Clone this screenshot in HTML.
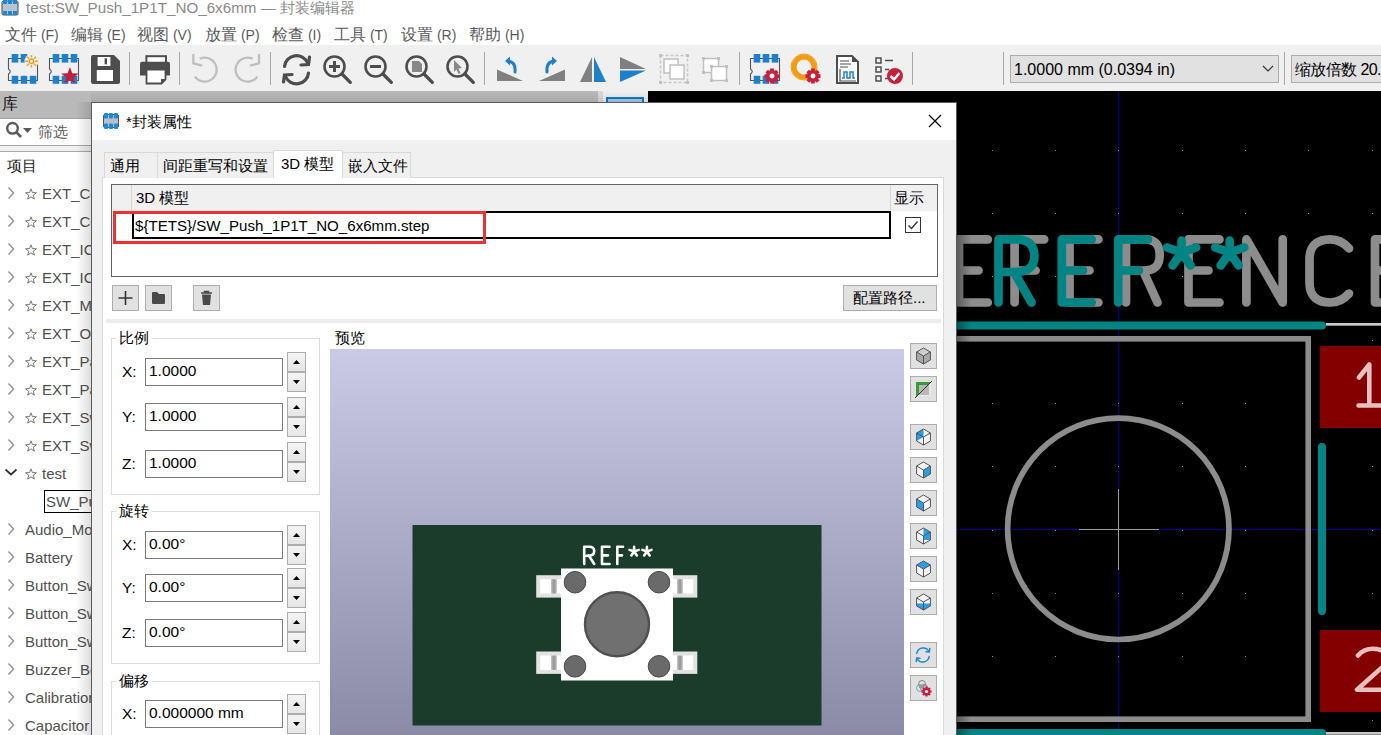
<!DOCTYPE html>
<html><head><meta charset="utf-8">
<style>
*{box-sizing:border-box}
body{margin:0;width:1381px;height:735px;overflow:hidden;position:relative;background:#f0f0f0;font-family:"Liberation Sans",sans-serif;color:#000}
.a{position:absolute}
.t{position:absolute;white-space:nowrap;line-height:1}
#titlebar{left:0;top:0;width:1381px;height:45px;background:#fff}
#toolbar{left:0;top:45px;width:1381px;height:46px;background:#f0f0f0}
.sep{position:absolute;top:54px;width:1px;height:30px;background:#a0a0a0}
#lib{left:0;top:91px;width:598px;height:644px;background:#fff}
#libhdr{left:0;top:91px;width:598px;height:27px;background:#b9b9b9}
#vtool{left:598px;top:91px;width:50px;height:644px;background:#f0f0f0}
#canvas{left:648px;top:91px;width:733px;height:644px;background:#000}
.tree{position:absolute;left:0;font-size:14px;color:#444}
#dlg{left:91px;top:102px;width:866px;height:640px;background:#f0f0f0;border:1px solid #5a5a5a;border-bottom:none}
</style></head><body>

<!-- title + menu -->
<div id="titlebar" class="a"></div>
<svg class="a" style="left:1px;top:0" width="18" height="16" viewBox="0 0 18 16">
  <rect x="1" y="1" width="16" height="14" rx="1.5" fill="#b8c4d0" stroke="#444" stroke-width="1"/>
  <rect x="2" y="0" width="4" height="4" fill="#1e88d4"/><rect x="7" y="0" width="4" height="4" fill="#1e88d4"/><rect x="12" y="0" width="4" height="4" fill="#1e88d4"/>
  <rect x="2" y="11" width="4" height="4" fill="#1e88d4"/><rect x="7" y="11" width="4" height="4" fill="#1e88d4"/><rect x="12" y="11" width="4" height="4" fill="#1e88d4"/>
</svg>
<div class="t" style="left:26px;top:0px;font-size:15.2px;color:#8a8a8a">test:SW_Push_1P1T_NO_6x6mm — 封装编辑器</div>
<div class="t" style="top:27px;font-size:14px;color:#5a5a5a;left:5px"><span style="font-size:15.5px">文件</span> (F)</div>
<div class="t" style="top:27px;font-size:14px;color:#5a5a5a;left:71px"><span style="font-size:15.5px">编辑</span> (E)</div>
<div class="t" style="top:27px;font-size:14px;color:#5a5a5a;left:137px"><span style="font-size:15.5px">视图</span> (V)</div>
<div class="t" style="top:27px;font-size:14px;color:#5a5a5a;left:205px"><span style="font-size:15.5px">放置</span> (P)</div>
<div class="t" style="top:27px;font-size:14px;color:#5a5a5a;left:272px"><span style="font-size:15.5px">检查</span> (I)</div>
<div class="t" style="top:27px;font-size:14px;color:#5a5a5a;left:334px"><span style="font-size:15.5px">工具</span> (T)</div>
<div class="t" style="top:27px;font-size:14px;color:#5a5a5a;left:401px"><span style="font-size:15.5px">设置</span> (R)</div>
<div class="t" style="top:27px;font-size:14px;color:#5a5a5a;left:469px"><span style="font-size:15.5px">帮助</span> (H)</div>

<!-- toolbar -->
<div id="toolbar" class="a"></div>
<svg class="a" style="left:0;top:0" width="1381" height="91" viewBox="0 0 1381 91"><rect x="129.0" y="52" width="1" height="33" fill="#a8a8a8"/><rect x="179.0" y="52" width="1" height="33" fill="#a8a8a8"/><rect x="270.0" y="52" width="1" height="33" fill="#a8a8a8"/><rect x="484.0" y="52" width="1" height="33" fill="#a8a8a8"/><rect x="739.0" y="52" width="1" height="33" fill="#a8a8a8"/><rect x="912.0" y="52" width="1" height="33" fill="#a8a8a8"/><rect x="1003.0" y="52" width="1" height="33" fill="#a8a8a8"/><rect x="1284.0" y="52" width="1" height="33" fill="#a8a8a8"/><path d="M8.5 58.5 H37.5 V80.5 H8.5 V74 Q12 71.5 8.5 69 V63 Z" fill="none" stroke="#555" stroke-width="1.1"/><rect x="11.7" y="54" width="6.6" height="8.6" fill="#1e7fcc"/><rect x="20.7" y="54" width="6.6" height="8.6" fill="#1e7fcc"/><rect x="11.7" y="75.8" width="6.6" height="8" fill="#1e7fcc"/><rect x="20.7" y="75.8" width="6.6" height="8" fill="#1e7fcc"/><rect x="29.7" y="75.8" width="6.6" height="8" fill="#1e7fcc"/><circle cx="31.5" cy="61.2" r="7" fill="#f0f0f0"/><circle cx="31.5" cy="61.2" r="4.2" fill="#f0f0f0"/><circle cx="31.5" cy="61.2" r="2.2" fill="none" stroke="#f39c12" stroke-width="1.4"/><path d="M35.10 61.20 L37.80 61.20 M34.05 63.75 L35.95 65.65 M31.50 64.80 L31.50 67.50 M28.95 63.75 L27.05 65.65 M27.90 61.20 L25.20 61.20 M28.95 58.65 L27.05 56.75 M31.50 57.60 L31.50 54.90 M34.05 58.65 L35.95 56.75 " stroke="#f39c12" stroke-width="1.4"/><path d="M49.5 58.5 H78.5 V80.5 H49.5 V74 Q53 71.5 49.5 69 V63 Z" fill="none" stroke="#555" stroke-width="1.1"/><rect x="52.7" y="54" width="6.6" height="8.6" fill="#1e7fcc"/><rect x="61.7" y="54" width="6.6" height="8.6" fill="#1e7fcc"/><rect x="70.7" y="54" width="6.6" height="8.6" fill="#1e7fcc"/><rect x="52.7" y="75.8" width="6.6" height="8" fill="#1e7fcc"/><rect x="61.7" y="75.8" width="6.6" height="8" fill="#1e7fcc"/><rect x="70.7" y="75.8" width="6.6" height="8" fill="#1e7fcc"/><polygon points="69.90,67.10 72.19,73.14 78.65,73.46 73.61,77.51 75.31,83.74 69.90,80.20 64.49,83.74 66.19,77.51 61.15,73.46 67.61,73.14" fill="#c0203c"/><path d="M91 57 Q91 55 93 55 H114 L120 61 V82 Q120 84 118 84 H93 Q91 84 91 82 Z" fill="#4d4d4d"/><rect x="97.6" y="57" width="12.8" height="9" fill="#fff"/><rect x="104.6" y="58.3" width="2.4" height="6" fill="#4d4d4d"/><rect x="96.8" y="70" width="16.2" height="11" fill="#fff"/><rect x="146.4" y="56.2" width="19.6" height="10" fill="#fff" stroke="#4d4d4d" stroke-width="2"/><path d="M142 61.8 H168 Q170 61.8 170 64 V75.5 H140 V64 Q140 61.8 142 61.8 Z" fill="#4d4d4d"/><path d="M146.5 69.5 H165.5 V79.5 L161.5 83.5 H146.5 Z" fill="#fff" stroke="#4d4d4d" stroke-width="1.8"/><path d="M161 83.5 V79 H166 Z" fill="#4d4d4d"/><g fill="none" stroke="#bfbfbf" stroke-width="2.3"><path d="M199.6 58.8 A12 12 0 1 1 194.9 76.6"/><path d="M193.3 54 V63.3 L202.3 65.6"/></g><g fill="none" stroke="#bfbfbf" stroke-width="2.3"><path d="M252.7 58.8 A12 12 0 1 0 257.4 76.6"/><path d="M259.0 54 V63.3 L250.0 65.6"/></g><g fill="none" stroke="#4d4d4d" stroke-width="3.2" stroke-linecap="round"><path d="M284.5 66.5 A12 12 0 0 1 307.5 63"/><path d="M308.5 73 A12 12 0 0 1 285.5 76.5"/><path d="M301 65 L308.5 64.5 L309.5 57"/><path d="M292 74.5 L284.5 75 L283.5 82"/></g><g transform="translate(323,55)"><circle cx="11.5" cy="11.5" r="10" fill="none" stroke="#4d4d4d" stroke-width="2.6"/><path d="M19 19 L27.3 27.3" stroke="#4d4d4d" stroke-width="3.3" stroke-linecap="round"/><path d="M11.5 6 V17 M6 11.5 H17" stroke="#4d4d4d" stroke-width="3"/></g><g transform="translate(364,55)"><circle cx="11.5" cy="11.5" r="10" fill="none" stroke="#4d4d4d" stroke-width="2.6"/><path d="M19 19 L27.3 27.3" stroke="#4d4d4d" stroke-width="3.3" stroke-linecap="round"/><path d="M6 11.5 H17" stroke="#4d4d4d" stroke-width="3"/></g><g transform="translate(405,55)"><circle cx="11.5" cy="11.5" r="10" fill="none" stroke="#4d4d4d" stroke-width="2.6"/><path d="M19 19 L27.3 27.3" stroke="#4d4d4d" stroke-width="3.3" stroke-linecap="round"/><path d="M7 6 H14 L17 9 V17 H7 Z" fill="#888"/></g><g transform="translate(446,55)"><circle cx="11.5" cy="11.5" r="10" fill="none" stroke="#4d4d4d" stroke-width="2.6"/><path d="M19 19 L27.3 27.3" stroke="#4d4d4d" stroke-width="3.3" stroke-linecap="round"/><path d="M8 5 L16 13 L12.5 13.5 L14.5 18 L12.5 19 L10.5 14.5 L8 17 Z" fill="#888"/></g><g transform="translate(497,56)"><path d="M0 13.5 L26 25 H0 Z" fill="#808080"/><path d="M18 16 Q19 6 11 5" fill="none" stroke="#1e7fcc" stroke-width="3" stroke-linecap="round"/><path d="M8 5 L13 0.5 L13 9.5 Z" fill="#1e7fcc"/></g><g transform="translate(539,56)"><path d="M26 13.5 L0 25 H26 Z" fill="#808080"/><path d="M8 16 Q7 6 15 5" fill="none" stroke="#1e7fcc" stroke-width="3" stroke-linecap="round"/><path d="M18 5 L13 0.5 L13 9.5 Z" fill="#1e7fcc"/></g><g transform="translate(580,57)"><path d="M12 0 V25 H0 Z" fill="#808080"/><path d="M14 0 V25 H26 Z" fill="#1e7fcc"/></g><g transform="translate(620,57)"><path d="M0 0 L26 12 H0 Z" fill="#808080"/><path d="M0 25 L26 13.5 H0 Z" fill="#1e7fcc"/></g><g transform="translate(659,54)"><rect x="1.5" y="1.5" width="27" height="27" fill="none" stroke="#c8c8c8" stroke-width="1.5" stroke-dasharray="3 2"/><rect x="0" y="0" width="3" height="3" fill="#c0c0c0"/><rect x="27" y="0" width="3" height="3" fill="#c0c0c0"/><rect x="0" y="27" width="3" height="3" fill="#c0c0c0"/><rect x="27" y="27" width="3" height="3" fill="#c0c0c0"/><rect x="5" y="5" width="14" height="14" fill="#fff" stroke="#c0c0c0" stroke-width="1.5"/><rect x="11" y="11" width="14" height="14" fill="#fff" stroke="#c0c0c0" stroke-width="1.5"/></g><g transform="translate(702,57)" fill="#fff" stroke="#c0c0c0" stroke-width="1.5"><rect x="1.5" y="1.5" width="15" height="14"/><rect x="9.5" y="9.5" width="15" height="14"/><g fill="#c0c0c0" stroke="none"><rect x="0" y="0" width="3" height="3"/><rect x="15" y="0" width="3" height="3"/><rect x="0" y="14" width="3" height="3"/><rect x="8" y="8" width="3" height="3"/><rect x="23" y="8" width="3" height="3"/><rect x="8" y="22" width="3" height="3"/><rect x="23" y="22" width="3" height="3"/></g></g><path d="M750.5 58.5 H779.5 V80.5 H750.5 V74 Q754 71.5 750.5 69 V63 Z" fill="none" stroke="#555" stroke-width="1.1"/><rect x="753.7" y="54" width="6.6" height="8.6" fill="#1e7fcc"/><rect x="753.7" y="75.8" width="6.6" height="8" fill="#1e7fcc"/><rect x="762.7" y="54" width="6.6" height="8.6" fill="#1e7fcc"/><rect x="762.7" y="75.8" width="6.6" height="8" fill="#1e7fcc"/><rect x="771.7" y="54" width="6.6" height="8.6" fill="#1e7fcc"/><rect x="771.7" y="75.8" width="6.6" height="8" fill="#1e7fcc"/><g transform="translate(750,53)"><circle cx="22" cy="23" r="6.0" fill="#c8203c"/><path d="M20.125 15.5 h3.75 v15.0 h-3.75z M14.5 21.125 v3.75 h15.0 v-3.75z" fill="#c8203c"/><path d="M15.4 19.25 l2.625 -2.625 l10.5 10.5 l-2.625 2.625z M28.6 19.25 l-2.625 -2.625 l-10.5 10.5 l2.625 2.625z" fill="#c8203c"/><circle cx="22" cy="23" r="2.475" fill="#fff"/></g><g transform="translate(791,54)"><circle cx="13" cy="13" r="10" fill="none" stroke="#f29c12" stroke-width="5"/><circle cx="13" cy="13" r="13" fill="none" stroke="#f29c12" stroke-width="1"/><circle cx="22" cy="22" r="6.0" fill="#c8203c"/><path d="M20.125 14.5 h3.75 v15.0 h-3.75z M14.5 20.125 v3.75 h15.0 v-3.75z" fill="#c8203c"/><path d="M15.4 18.25 l2.625 -2.625 l10.5 10.5 l-2.625 2.625z M28.6 18.25 l-2.625 -2.625 l-10.5 10.5 l2.625 2.625z" fill="#c8203c"/><circle cx="22" cy="22" r="2.475" fill="#fff"/></g><g transform="translate(836,55)"><path d="M1 1 H16 L22 7 V28 H1 Z" fill="#fff" stroke="#4d4d4d" stroke-width="2"/><path d="M16 1 V7 H22 Z" fill="#4d4d4d"/><path d="M4 6 H13 M4 9 H15 M4 12 H12" stroke="#4d4d4d" stroke-width="1.2"/><path d="M4 14 V26 H20" fill="none" stroke="#4d4d4d" stroke-width="1.2"/><path d="M6 23 H8 V17 H11 V23 H14 V17 H17 V23 H19" fill="none" stroke="#1e7fcc" stroke-width="1.5"/></g><g transform="translate(875,57)"><g fill="none" stroke="#4d4d4d" stroke-width="1.5"><rect x="1" y="1" width="5" height="5"/><rect x="1" y="10" width="5" height="5"/><rect x="1" y="19" width="5" height="5"/></g><path d="M10 3.5 H18 M10 12.5 H14 M10 21.5 H13" stroke="#4d4d4d" stroke-width="1.5"/><circle cx="20" cy="19" r="8" fill="#c8203c"/><path d="M15.5 19 L19 22.5 L24.5 16" fill="none" stroke="#fff" stroke-width="2.5"/></g></svg>
<div class="a" style="left:1010px;top:55px;width:269px;height:28px;background:#e1e1e1;border:1px solid #adadad"></div>
<div class="t" style="left:1014px;top:62px;font-size:16px;color:#000">1.0000 mm (0.0394 in)</div>
<svg class="a" style="left:1262px;top:65px" width="12" height="8"><path d="M1 1 L6 6 L11 1" fill="none" stroke="#333" stroke-width="1.2"/></svg>
<div class="a" style="left:1291px;top:55px;width:100px;height:28px;background:#e1e1e1;border:1px solid #adadad"></div>
<div class="t" style="left:1295px;top:62px;font-size:16px;color:#000;letter-spacing:-0.6px">缩放倍数 20.</div>


<!-- left library panel -->
<div id="lib" class="a"></div>
<div id="libhdr" class="a"></div>
<div id="vtool" class="a"></div>
<div class="t" style="left:2px;top:96px;font-size:16px;color:#111">库</div>
<div class="a" style="left:0;top:118px;width:598px;height:1px;background:#a0a0a8"></div>
<svg class="a" style="left:0;top:118px" width="40" height="27"><circle cx="12.5" cy="10.3" r="5.3" fill="none" stroke="#5a5a5a" stroke-width="2.4"/><path d="M16.3 14.2 L21 19" stroke="#5a5a5a" stroke-width="2.6"/><path d="M23 10 H32 L27.5 15 Z" fill="#5a5a5a"/></svg>
<div class="t" style="left:38px;top:124px;font-size:15px;color:#5a5a5a">筛选</div>
<div class="a" style="left:0;top:145px;width:598px;height:7px;background:#f0f0f0;border-top:1px solid #a8a8a8;border-bottom:1px solid #a8a8a8"></div>
<div class="t" style="left:7px;top:158px;font-size:15px;color:#1a1a1a">项目</div>
<svg class="a" style="left:6px;top:186px" width="10" height="14"><path d="M2.5 1.5 L7.5 7 L2.5 12.5" fill="none" stroke="#9a9a9a" stroke-width="1.6"/></svg>
<svg class="a" style="left:20px;top:185px" width="20" height="20"><polygon points="11.00,3.80 12.41,7.56 16.42,7.74 13.28,10.24 14.35,14.11 11.00,11.90 7.65,14.11 8.72,10.24 5.58,7.74 9.59,7.56" fill="none" stroke="#666" stroke-width="0.9"/></svg>
<div class="t" style="left:42px;top:186px;font-size:15px;color:#505050">EXT_Co</div>
<svg class="a" style="left:6px;top:214px" width="10" height="14"><path d="M2.5 1.5 L7.5 7 L2.5 12.5" fill="none" stroke="#9a9a9a" stroke-width="1.6"/></svg>
<svg class="a" style="left:20px;top:213px" width="20" height="20"><polygon points="11.00,3.80 12.41,7.56 16.42,7.74 13.28,10.24 14.35,14.11 11.00,11.90 7.65,14.11 8.72,10.24 5.58,7.74 9.59,7.56" fill="none" stroke="#666" stroke-width="0.9"/></svg>
<div class="t" style="left:42px;top:214px;font-size:15px;color:#505050">EXT_Co</div>
<svg class="a" style="left:6px;top:242px" width="10" height="14"><path d="M2.5 1.5 L7.5 7 L2.5 12.5" fill="none" stroke="#9a9a9a" stroke-width="1.6"/></svg>
<svg class="a" style="left:20px;top:241px" width="20" height="20"><polygon points="11.00,3.80 12.41,7.56 16.42,7.74 13.28,10.24 14.35,14.11 11.00,11.90 7.65,14.11 8.72,10.24 5.58,7.74 9.59,7.56" fill="none" stroke="#666" stroke-width="0.9"/></svg>
<div class="t" style="left:42px;top:242px;font-size:15px;color:#505050">EXT_IC_</div>
<svg class="a" style="left:6px;top:270px" width="10" height="14"><path d="M2.5 1.5 L7.5 7 L2.5 12.5" fill="none" stroke="#9a9a9a" stroke-width="1.6"/></svg>
<svg class="a" style="left:20px;top:269px" width="20" height="20"><polygon points="11.00,3.80 12.41,7.56 16.42,7.74 13.28,10.24 14.35,14.11 11.00,11.90 7.65,14.11 8.72,10.24 5.58,7.74 9.59,7.56" fill="none" stroke="#666" stroke-width="0.9"/></svg>
<div class="t" style="left:42px;top:270px;font-size:15px;color:#505050">EXT_IC_</div>
<svg class="a" style="left:6px;top:298px" width="10" height="14"><path d="M2.5 1.5 L7.5 7 L2.5 12.5" fill="none" stroke="#9a9a9a" stroke-width="1.6"/></svg>
<svg class="a" style="left:20px;top:297px" width="20" height="20"><polygon points="11.00,3.80 12.41,7.56 16.42,7.74 13.28,10.24 14.35,14.11 11.00,11.90 7.65,14.11 8.72,10.24 5.58,7.74 9.59,7.56" fill="none" stroke="#666" stroke-width="0.9"/></svg>
<div class="t" style="left:42px;top:298px;font-size:15px;color:#505050">EXT_Mo</div>
<svg class="a" style="left:6px;top:326px" width="10" height="14"><path d="M2.5 1.5 L7.5 7 L2.5 12.5" fill="none" stroke="#9a9a9a" stroke-width="1.6"/></svg>
<svg class="a" style="left:20px;top:325px" width="20" height="20"><polygon points="11.00,3.80 12.41,7.56 16.42,7.74 13.28,10.24 14.35,14.11 11.00,11.90 7.65,14.11 8.72,10.24 5.58,7.74 9.59,7.56" fill="none" stroke="#666" stroke-width="0.9"/></svg>
<div class="t" style="left:42px;top:326px;font-size:15px;color:#505050">EXT_Ot</div>
<svg class="a" style="left:6px;top:354px" width="10" height="14"><path d="M2.5 1.5 L7.5 7 L2.5 12.5" fill="none" stroke="#9a9a9a" stroke-width="1.6"/></svg>
<svg class="a" style="left:20px;top:353px" width="20" height="20"><polygon points="11.00,3.80 12.41,7.56 16.42,7.74 13.28,10.24 14.35,14.11 11.00,11.90 7.65,14.11 8.72,10.24 5.58,7.74 9.59,7.56" fill="none" stroke="#666" stroke-width="0.9"/></svg>
<div class="t" style="left:42px;top:354px;font-size:15px;color:#505050">EXT_Pa</div>
<svg class="a" style="left:6px;top:382px" width="10" height="14"><path d="M2.5 1.5 L7.5 7 L2.5 12.5" fill="none" stroke="#9a9a9a" stroke-width="1.6"/></svg>
<svg class="a" style="left:20px;top:381px" width="20" height="20"><polygon points="11.00,3.80 12.41,7.56 16.42,7.74 13.28,10.24 14.35,14.11 11.00,11.90 7.65,14.11 8.72,10.24 5.58,7.74 9.59,7.56" fill="none" stroke="#666" stroke-width="0.9"/></svg>
<div class="t" style="left:42px;top:382px;font-size:15px;color:#505050">EXT_Pa</div>
<svg class="a" style="left:6px;top:410px" width="10" height="14"><path d="M2.5 1.5 L7.5 7 L2.5 12.5" fill="none" stroke="#9a9a9a" stroke-width="1.6"/></svg>
<svg class="a" style="left:20px;top:409px" width="20" height="20"><polygon points="11.00,3.80 12.41,7.56 16.42,7.74 13.28,10.24 14.35,14.11 11.00,11.90 7.65,14.11 8.72,10.24 5.58,7.74 9.59,7.56" fill="none" stroke="#666" stroke-width="0.9"/></svg>
<div class="t" style="left:42px;top:410px;font-size:15px;color:#505050">EXT_Sw</div>
<svg class="a" style="left:6px;top:438px" width="10" height="14"><path d="M2.5 1.5 L7.5 7 L2.5 12.5" fill="none" stroke="#9a9a9a" stroke-width="1.6"/></svg>
<svg class="a" style="left:20px;top:437px" width="20" height="20"><polygon points="11.00,3.80 12.41,7.56 16.42,7.74 13.28,10.24 14.35,14.11 11.00,11.90 7.65,14.11 8.72,10.24 5.58,7.74 9.59,7.56" fill="none" stroke="#666" stroke-width="0.9"/></svg>
<div class="t" style="left:42px;top:438px;font-size:15px;color:#505050">EXT_Sw</div>
<svg class="a" style="left:4px;top:467px" width="14" height="10"><path d="M1.5 2.5 L7 7.5 L12.5 2.5" fill="none" stroke="#333" stroke-width="1.8"/></svg>
<svg class="a" style="left:20px;top:465px" width="20" height="20"><polygon points="11.00,3.80 12.41,7.56 16.42,7.74 13.28,10.24 14.35,14.11 11.00,11.90 7.65,14.11 8.72,10.24 5.58,7.74 9.59,7.56" fill="none" stroke="#666" stroke-width="0.9"/></svg>
<div class="t" style="left:42px;top:466px;font-size:15px;color:#505050">test</div>
<div class="a" style="left:44px;top:490px;width:60px;height:23px;border:1px solid #000"></div>
<div class="t" style="left:46px;top:494px;font-size:15px;color:#505050">SW_Push</div>
<svg class="a" style="left:6px;top:522px" width="10" height="14"><path d="M2.5 1.5 L7.5 7 L2.5 12.5" fill="none" stroke="#9a9a9a" stroke-width="1.6"/></svg>
<div class="t" style="left:25px;top:522px;font-size:15px;color:#505050">Audio_Mo</div>
<svg class="a" style="left:6px;top:550px" width="10" height="14"><path d="M2.5 1.5 L7.5 7 L2.5 12.5" fill="none" stroke="#9a9a9a" stroke-width="1.6"/></svg>
<div class="t" style="left:25px;top:550px;font-size:15px;color:#505050">Battery</div>
<svg class="a" style="left:6px;top:578px" width="10" height="14"><path d="M2.5 1.5 L7.5 7 L2.5 12.5" fill="none" stroke="#9a9a9a" stroke-width="1.6"/></svg>
<div class="t" style="left:25px;top:578px;font-size:15px;color:#505050">Button_Sw</div>
<svg class="a" style="left:6px;top:606px" width="10" height="14"><path d="M2.5 1.5 L7.5 7 L2.5 12.5" fill="none" stroke="#9a9a9a" stroke-width="1.6"/></svg>
<div class="t" style="left:25px;top:606px;font-size:15px;color:#505050">Button_Sw</div>
<svg class="a" style="left:6px;top:634px" width="10" height="14"><path d="M2.5 1.5 L7.5 7 L2.5 12.5" fill="none" stroke="#9a9a9a" stroke-width="1.6"/></svg>
<div class="t" style="left:25px;top:634px;font-size:15px;color:#505050">Button_Sw</div>
<svg class="a" style="left:6px;top:662px" width="10" height="14"><path d="M2.5 1.5 L7.5 7 L2.5 12.5" fill="none" stroke="#9a9a9a" stroke-width="1.6"/></svg>
<div class="t" style="left:25px;top:662px;font-size:15px;color:#505050">Buzzer_Be</div>
<svg class="a" style="left:6px;top:690px" width="10" height="14"><path d="M2.5 1.5 L7.5 7 L2.5 12.5" fill="none" stroke="#9a9a9a" stroke-width="1.6"/></svg>
<div class="t" style="left:25px;top:690px;font-size:15px;color:#505050">Calibration</div>
<svg class="a" style="left:6px;top:718px" width="10" height="14"><path d="M2.5 1.5 L7.5 7 L2.5 12.5" fill="none" stroke="#9a9a9a" stroke-width="1.6"/></svg>
<div class="t" style="left:25px;top:718px;font-size:15px;color:#505050">Capacitor</div>
<div class="a" style="left:598px;top:91px;width:5px;height:644px;background:#d9d9d9"></div>
<div class="a" style="left:606px;top:97px;width:38px;height:30px;background:#a8c8e4;border:2px solid #0a78d4"></div>

<!-- canvas -->
<svg class="a" style="left:648px;top:91px" width="733" height="644" viewBox="648 91 733 644">
<rect x="648" y="91" width="733" height="644" fill="#000"/>
<rect x="1118" y="91" width="1" height="644" fill="#000096"/>
<rect x="648" y="529" width="733" height="1" fill="#000096"/>
<path d="M675 150h1v1h-1zM675 213h1v1h-1zM675 276h1v1h-1zM675 340h1v1h-1zM675 403h1v1h-1zM675 466h1v1h-1zM675 530h1v1h-1zM675 593h1v1h-1zM675 656h1v1h-1zM675 720h1v1h-1zM738 150h1v1h-1zM738 213h1v1h-1zM738 276h1v1h-1zM738 340h1v1h-1zM738 403h1v1h-1zM738 466h1v1h-1zM738 530h1v1h-1zM738 593h1v1h-1zM738 656h1v1h-1zM738 720h1v1h-1zM802 150h1v1h-1zM802 213h1v1h-1zM802 276h1v1h-1zM802 340h1v1h-1zM802 403h1v1h-1zM802 466h1v1h-1zM802 530h1v1h-1zM802 593h1v1h-1zM802 656h1v1h-1zM802 720h1v1h-1zM865 150h1v1h-1zM865 213h1v1h-1zM865 276h1v1h-1zM865 340h1v1h-1zM865 403h1v1h-1zM865 466h1v1h-1zM865 530h1v1h-1zM865 593h1v1h-1zM865 656h1v1h-1zM865 720h1v1h-1zM928 150h1v1h-1zM928 213h1v1h-1zM928 276h1v1h-1zM928 340h1v1h-1zM928 403h1v1h-1zM928 466h1v1h-1zM928 530h1v1h-1zM928 593h1v1h-1zM928 656h1v1h-1zM928 720h1v1h-1zM992 150h1v1h-1zM992 213h1v1h-1zM992 276h1v1h-1zM992 340h1v1h-1zM992 403h1v1h-1zM992 466h1v1h-1zM992 530h1v1h-1zM992 593h1v1h-1zM992 656h1v1h-1zM992 720h1v1h-1zM1055 150h1v1h-1zM1055 213h1v1h-1zM1055 276h1v1h-1zM1055 340h1v1h-1zM1055 403h1v1h-1zM1055 466h1v1h-1zM1055 530h1v1h-1zM1055 593h1v1h-1zM1055 656h1v1h-1zM1055 720h1v1h-1zM1118 150h1v1h-1zM1118 213h1v1h-1zM1118 276h1v1h-1zM1118 340h1v1h-1zM1118 403h1v1h-1zM1118 466h1v1h-1zM1118 530h1v1h-1zM1118 593h1v1h-1zM1118 656h1v1h-1zM1118 720h1v1h-1zM1182 150h1v1h-1zM1182 213h1v1h-1zM1182 276h1v1h-1zM1182 340h1v1h-1zM1182 403h1v1h-1zM1182 466h1v1h-1zM1182 530h1v1h-1zM1182 593h1v1h-1zM1182 656h1v1h-1zM1182 720h1v1h-1zM1245 150h1v1h-1zM1245 213h1v1h-1zM1245 276h1v1h-1zM1245 340h1v1h-1zM1245 403h1v1h-1zM1245 466h1v1h-1zM1245 530h1v1h-1zM1245 593h1v1h-1zM1245 656h1v1h-1zM1245 720h1v1h-1zM1308 150h1v1h-1zM1308 213h1v1h-1zM1308 276h1v1h-1zM1308 340h1v1h-1zM1308 403h1v1h-1zM1308 466h1v1h-1zM1308 530h1v1h-1zM1308 593h1v1h-1zM1308 656h1v1h-1zM1308 720h1v1h-1zM1372 150h1v1h-1zM1372 213h1v1h-1zM1372 276h1v1h-1zM1372 340h1v1h-1zM1372 403h1v1h-1zM1372 466h1v1h-1zM1372 530h1v1h-1zM1372 593h1v1h-1zM1372 656h1v1h-1zM1372 720h1v1h-1z" fill="#9a9a9a"/>

<path d="M987.8 239.4 H959 V302.5 H987.8 M959 270.5 H978.5M1044.2 239.4 H1014.6 V302.5 M1014.6 270.5 H1035.6M1098.4 239.4 H1069.5 V302.5 H1098.4 M1069.5 270.5 H1089.5M1126 302.5 V239.4 H1145 Q1159.7 239.4 1159.7 254.95 Q1159.7 270.5 1145 270.5 H1126 M1143 270.5 L1157.5 302.5M1219.5 239.4 H1188.5 V302.5 H1219.5 M1188.5 270.5 H1208.5M1246.4 302.5 V239.4 L1282.7 302.5 V239.4M1349.0 248.4 Q1341.0 239.4 1330.5 239.4 Q1309.5 239.4 1309.5 259.4 V282.5 Q1309.5 302.5 1330.5 302.5 Q1341.0 302.5 1349.0 293.5M1405 239.4 H1375 V302.5 H1405 M1375 270.5 H1395" fill="none" stroke="#8c8c8c" stroke-width="8.7" stroke-linecap="round" stroke-linejoin="round"/>
<path d="M998.5 302.5 V239.4 H1016 Q1034.4 239.4 1034.4 256 Q1034.4 272 1016 272 H998.5 M1014 272 L1031.5 302.5M1091.7 239.4 H1061.8 V302.5 H1091.7 M1061.8 270.5 H1083.0M1148.0 239.4 H1118.2 V302.5 M1118.2 270.5 H1139.0M1181.6 240.5 V252.5 M1167.1 247.5 L1181.6 252.5 L1196.1 247.5 M1172.6 265.5 L1181.6 252.5 L1190.6 265.5M1229.7 240.5 V252.5 M1215.2 247.5 L1229.7 252.5 L1244.2 247.5 M1220.7 265.5 L1229.7 252.5 L1238.7 265.5" fill="none" stroke="#008484" stroke-width="8.7" stroke-linecap="round" stroke-linejoin="round"/>
<path d="M940 325.5 H1322 M1322 447 V611 M940 733 H1322" stroke="#008484" stroke-width="8" stroke-linecap="round"/>
<rect x="1326" y="323" width="60" height="2.7" fill="#c8c8c8"/>
<rect x="1326" y="732" width="60" height="2.7" fill="#c8c8c8"/>
<rect x="925" y="338.8" width="383.2" height="380.4" fill="none" stroke="#8c8c8c" stroke-width="5.6"/>
<circle cx="1118.3" cy="528.8" r="110.7" fill="none" stroke="#8c8c8c" stroke-width="5.7"/>
<rect x="1079" y="529" width="80" height="1" fill="#a0a0a0"/><rect x="1118" y="489" width="1" height="81" fill="#a0a0a0"/>
<rect x="1320" y="346" width="70" height="82" fill="#840000"/>
<rect x="1320" y="630" width="70" height="82" fill="#840000"/>
<path d="M1359 377.5 L1369.3 364.5 V405.5 M1358.5 405.5 H1392" fill="none" stroke="#e6c0c0" stroke-width="4.6" stroke-linecap="round" stroke-linejoin="round"/>
<path d="M1358 655.5 Q1364 648.8 1373 648.8 Q1388 649 1388 662 L1357 689.8 H1392" fill="none" stroke="#e6c0c0" stroke-width="4.6" stroke-linecap="round" stroke-linejoin="round"/>
</svg>

<!-- dialog -->
<div id="dlg" class="a"></div>
<div class="a" style="left:92px;top:103px;width:864px;height:37px;background:#fff"></div>
<svg class="a" style="left:103px;top:113px" width="16" height="16" viewBox="0 0 16 16"><rect x="0.5" y="1.5" width="15" height="13" rx="1.5" fill="#b4c0cc" stroke="#555" stroke-width="1"/><g fill="#1e88d4"><rect x="1" y="0" width="4" height="5.5" rx="1"/><rect x="6" y="0" width="4" height="5.5" rx="1"/><rect x="11" y="0" width="4" height="5.5" rx="1"/><rect x="1" y="10.5" width="4" height="5.5" rx="1"/><rect x="6" y="10.5" width="4" height="5.5" rx="1"/><rect x="11" y="10.5" width="4" height="5.5" rx="1"/></g></svg>
<div class="t" style="left:126px;top:114px;font-size:15px;color:#000">*封装属性</div>
<svg class="a" style="left:928px;top:114px" width="14" height="14"><path d="M1 1 L13 13 M13 1 L1 13" stroke="#000" stroke-width="1.2"/></svg>
<div class="a" style="left:102px;top:177px;width:842px;height:570px;background:#fff;border:1px solid #d9d9d9"></div>
<div class="a" style="left:104px;top:152px;width:54px;height:26px;background:#f0f0f0;border:1px solid #d9d9d9;border-bottom:none"></div>
<div class="t" style="left:110px;top:158px;font-size:15px;color:#000">通用</div>
<div class="a" style="left:157px;top:152px;width:117px;height:26px;background:#f0f0f0;border:1px solid #d9d9d9;border-bottom:none"></div>
<div class="t" style="left:163px;top:158px;font-size:15px;color:#000">间距重写和设置</div>
<div class="a" style="left:342px;top:152px;width:69px;height:26px;background:#f0f0f0;border:1px solid #d9d9d9;border-bottom:none"></div>
<div class="t" style="left:348px;top:158px;font-size:15px;color:#000">嵌入文件</div>
<div class="a" style="left:273px;top:150px;width:70px;height:28px;background:#fff;border:1px solid #d9d9d9;border-bottom:none"></div>
<div class="t" style="left:281px;top:156px;font-size:15px;color:#000">3D 模型</div>
<div class="a" style="left:111px;top:184px;width:827px;height:93px;background:#fff;border:1px solid #646464"></div>
<div class="a" style="left:112px;top:185px;width:825px;height:26px;background:#f0f0f0"></div>
<div class="a" style="left:131px;top:185px;width:1px;height:26px;background:#d4d4d4"></div>
<div class="a" style="left:890px;top:185px;width:1px;height:26px;background:#d4d4d4"></div>
<div class="t" style="left:136px;top:190px;font-size:15px;color:#000">3D 模型</div>
<div class="t" style="left:894px;top:190px;font-size:15px;color:#000">显示</div>
<div class="a" style="left:132px;top:211px;width:759px;height:28px;background:#fff;border:2px solid #000"></div>
<div class="t" style="left:135px;top:218px;font-size:15.1px;color:#000">${TETS}/SW_Push_1P1T_NO_6x6mm.step</div>
<div class="a" style="left:905px;top:217px;width:16px;height:16px;border:1px solid #333;background:#fff"></div>
<svg class="a" style="left:905px;top:217px" width="16" height="16"><path d="M3.5 8.5 L6.5 11.5 L12.5 4.5" fill="none" stroke="#333" stroke-width="1.3"/></svg>
<div class="a" style="left:113px;top:211px;width:373px;height:33px;border:3px solid #ee3030"></div>
<div class="a" style="left:112px;top:285px;width:27px;height:26px;background:#e1e1e1;border:1px solid #adadad"></div>
<div class="a" style="left:145px;top:285px;width:27px;height:26px;background:#e1e1e1;border:1px solid #adadad"></div>
<div class="a" style="left:193px;top:285px;width:27px;height:26px;background:#e1e1e1;border:1px solid #adadad"></div>
<svg class="a" style="left:112px;top:285px" width="27" height="26"><path d="M13.5 6 V20 M6.5 13 H20.5" stroke="#333" stroke-width="1.6"/></svg>
<svg class="a" style="left:145px;top:285px" width="27" height="26"><path d="M7 8 Q7 7 8 7 H12 L14 9 H19 Q20 9 20 10 V18 Q20 19 19 19 H8 Q7 19 7 18 Z" fill="#4a4a4a"/></svg>
<svg class="a" style="left:193px;top:285px" width="27" height="26"><path d="M8 8 H19 M11.5 8 V6.5 H15.5 V8" fill="none" stroke="#4a4a4a" stroke-width="1.5"/><path d="M9 9.5 H18 L17 20 H10 Z" fill="#4a4a4a"/></svg>
<div class="a" style="left:843px;top:285px;width:94px;height:26px;background:#e1e1e1;border:1px solid #adadad"></div>
<div class="t" style="left:853px;top:290px;font-size:15px;color:#000">配置路径...</div>
<div class="a" style="left:106px;top:319px;width:835px;height:4px;background:#ececec"></div>
<div class="a" style="left:111px;top:338px;width:209px;height:157px;border:1px solid #dcdcdc"></div>
<div class="t" style="left:116px;top:330px;font-size:15px;color:#000;background:#fff;padding:0 3px 0 3px">比例</div>
<div class="t" style="left:122px;top:364px;font-size:15.5px;color:#000">X:</div>
<div class="a" style="left:145px;top:358px;width:138px;height:28px;border:1px solid #7a7a7a;background:#fff"></div>
<div class="t" style="left:149px;top:363px;font-size:15.5px;color:#000">1.0000</div>
<div class="a" style="left:287px;top:352px;width:19px;height:20px;background:linear-gradient(#f4f4f4,#e6e6e6);border:1px solid #acacac"></div>
<div class="a" style="left:287px;top:372px;width:19px;height:20px;background:linear-gradient(#f4f4f4,#e6e6e6);border:1px solid #acacac"></div>
<svg class="a" style="left:287px;top:352px" width="19" height="40"><path d="M6 12 L9.5 8 L13 12 Z M6 28 L9.5 32 L13 28 Z" fill="#000"/></svg>
<div class="t" style="left:122px;top:409px;font-size:15.5px;color:#000">Y:</div>
<div class="a" style="left:145px;top:403px;width:138px;height:28px;border:1px solid #7a7a7a;background:#fff"></div>
<div class="t" style="left:149px;top:408px;font-size:15.5px;color:#000">1.0000</div>
<div class="a" style="left:287px;top:397px;width:19px;height:20px;background:linear-gradient(#f4f4f4,#e6e6e6);border:1px solid #acacac"></div>
<div class="a" style="left:287px;top:417px;width:19px;height:20px;background:linear-gradient(#f4f4f4,#e6e6e6);border:1px solid #acacac"></div>
<svg class="a" style="left:287px;top:397px" width="19" height="40"><path d="M6 12 L9.5 8 L13 12 Z M6 28 L9.5 32 L13 28 Z" fill="#000"/></svg>
<div class="t" style="left:122px;top:456px;font-size:15.5px;color:#000">Z:</div>
<div class="a" style="left:145px;top:450px;width:138px;height:28px;border:1px solid #7a7a7a;background:#fff"></div>
<div class="t" style="left:149px;top:455px;font-size:15.5px;color:#000">1.0000</div>
<div class="a" style="left:287px;top:442px;width:19px;height:20px;background:linear-gradient(#f4f4f4,#e6e6e6);border:1px solid #acacac"></div>
<div class="a" style="left:287px;top:462px;width:19px;height:20px;background:linear-gradient(#f4f4f4,#e6e6e6);border:1px solid #acacac"></div>
<svg class="a" style="left:287px;top:442px" width="19" height="40"><path d="M6 12 L9.5 8 L13 12 Z M6 28 L9.5 32 L13 28 Z" fill="#000"/></svg>
<div class="a" style="left:111px;top:511px;width:209px;height:153px;border:1px solid #dcdcdc"></div>
<div class="t" style="left:116px;top:503px;font-size:15px;color:#000;background:#fff;padding:0 3px 0 3px">旋转</div>
<div class="t" style="left:122px;top:537px;font-size:15.5px;color:#000">X:</div>
<div class="a" style="left:145px;top:531px;width:138px;height:28px;border:1px solid #7a7a7a;background:#fff"></div>
<div class="t" style="left:149px;top:536px;font-size:15.5px;color:#000">0.00°</div>
<div class="a" style="left:287px;top:525px;width:19px;height:20px;background:linear-gradient(#f4f4f4,#e6e6e6);border:1px solid #acacac"></div>
<div class="a" style="left:287px;top:545px;width:19px;height:20px;background:linear-gradient(#f4f4f4,#e6e6e6);border:1px solid #acacac"></div>
<svg class="a" style="left:287px;top:525px" width="19" height="40"><path d="M6 12 L9.5 8 L13 12 Z M6 28 L9.5 32 L13 28 Z" fill="#000"/></svg>
<div class="t" style="left:122px;top:580px;font-size:15.5px;color:#000">Y:</div>
<div class="a" style="left:145px;top:574px;width:138px;height:28px;border:1px solid #7a7a7a;background:#fff"></div>
<div class="t" style="left:149px;top:579px;font-size:15.5px;color:#000">0.00°</div>
<div class="a" style="left:287px;top:568px;width:19px;height:20px;background:linear-gradient(#f4f4f4,#e6e6e6);border:1px solid #acacac"></div>
<div class="a" style="left:287px;top:588px;width:19px;height:20px;background:linear-gradient(#f4f4f4,#e6e6e6);border:1px solid #acacac"></div>
<svg class="a" style="left:287px;top:568px" width="19" height="40"><path d="M6 12 L9.5 8 L13 12 Z M6 28 L9.5 32 L13 28 Z" fill="#000"/></svg>
<div class="t" style="left:122px;top:625px;font-size:15.5px;color:#000">Z:</div>
<div class="a" style="left:145px;top:619px;width:138px;height:28px;border:1px solid #7a7a7a;background:#fff"></div>
<div class="t" style="left:149px;top:624px;font-size:15.5px;color:#000">0.00°</div>
<div class="a" style="left:287px;top:612px;width:19px;height:20px;background:linear-gradient(#f4f4f4,#e6e6e6);border:1px solid #acacac"></div>
<div class="a" style="left:287px;top:632px;width:19px;height:20px;background:linear-gradient(#f4f4f4,#e6e6e6);border:1px solid #acacac"></div>
<svg class="a" style="left:287px;top:612px" width="19" height="40"><path d="M6 12 L9.5 8 L13 12 Z M6 28 L9.5 32 L13 28 Z" fill="#000"/></svg>
<div class="a" style="left:111px;top:681px;width:209px;height:80px;border:1px solid #dcdcdc"></div>
<div class="t" style="left:116px;top:673px;font-size:15px;color:#000;background:#fff;padding:0 3px 0 3px">偏移</div>
<div class="t" style="left:122px;top:706px;font-size:15.5px;color:#000">X:</div>
<div class="a" style="left:145px;top:700px;width:138px;height:28px;border:1px solid #7a7a7a;background:#fff"></div>
<div class="t" style="left:149px;top:705px;font-size:15.5px;color:#000">0.000000 mm</div>
<div class="a" style="left:287px;top:694px;width:19px;height:20px;background:linear-gradient(#f4f4f4,#e6e6e6);border:1px solid #acacac"></div>
<div class="a" style="left:287px;top:714px;width:19px;height:20px;background:linear-gradient(#f4f4f4,#e6e6e6);border:1px solid #acacac"></div>
<svg class="a" style="left:287px;top:694px" width="19" height="40"><path d="M6 12 L9.5 8 L13 12 Z M6 28 L9.5 32 L13 28 Z" fill="#000"/></svg>
<div class="t" style="left:335px;top:330px;font-size:15px;color:#000">预览</div>
<div class="a" style="left:330px;top:349px;width:574px;height:390px;background:linear-gradient(#cacae6,#8a8aa6)"></div>
<svg class="a" style="left:330px;top:349px" width="574" height="386" viewBox="330 349 574 386">
<rect x="412.5" y="525" width="409" height="200.5" fill="#1b3b2b"/>
<path d="M584.2 564 V546.8 H589.2 Q594.2 546.8 594.2 551.0999999999999 Q594.2 555.6999999999999 589.2 555.6999999999999 H584.2 M588.7 555.4 L594.2 564M609.5 546.8 H602 V564 H609.5 M602 555.4 H608 M623 546.8 H617.3 V564 M617.3 555.4 H622" fill="none" stroke="#fff" stroke-width="2.6" stroke-linecap="round" stroke-linejoin="round"/>
<path d="M634.1 546.9 V551.5 M629.5 549.89 L634.1 551.5 L638.7 549.89 M631.34 555.41 L634.1 551.5 L636.86 555.41M646.9 546.9 V551.5 M642.3 549.89 L646.9 551.5 L651.5 549.89 M644.14 555.41 L646.9 551.5 L649.66 555.41" fill="none" stroke="#fff" stroke-width="2.6" stroke-linecap="round" stroke-linejoin="round"/>
<defs><linearGradient id="lg1" x1="0" x2="1"><stop offset="0" stop-color="#c8c8c8"/><stop offset="0.5" stop-color="#909090"/><stop offset="1" stop-color="#d0d0d0"/></linearGradient></defs>
<rect x="536.2" y="575.2" width="24.8" height="22.4" fill="#e2e2e2"/>
<rect x="540.2" y="579.2" width="20.8" height="14.4" fill="#fff"/>
<rect x="551" y="579.2" width="6" height="14.4" fill="url(#lg1)"/>
<rect x="673" y="575.2" width="24.3" height="22.4" fill="#e2e2e2"/>
<rect x="673" y="579.2" width="20.3" height="14.4" fill="#fff"/>
<rect x="677" y="579.2" width="6" height="14.4" fill="url(#lg1)"/>
<rect x="536.2" y="651.5" width="24.8" height="22.4" fill="#e2e2e2"/>
<rect x="540.2" y="655.5" width="20.8" height="14.4" fill="#fff"/>
<rect x="551" y="655.5" width="6" height="14.4" fill="url(#lg1)"/>
<rect x="673" y="651.5" width="24.3" height="22.4" fill="#e2e2e2"/>
<rect x="673" y="655.5" width="20.3" height="14.4" fill="#fff"/>
<rect x="677" y="655.5" width="6" height="14.4" fill="url(#lg1)"/>
<rect x="561" y="568.5" width="112" height="112" fill="#fff"/>
<circle cx="575" cy="582.2" r="10.8" fill="#6a6a6a" stroke="#4a4a4a" stroke-width="1"/>
<circle cx="659" cy="582.2" r="10.8" fill="#6a6a6a" stroke="#4a4a4a" stroke-width="1"/>
<circle cx="575" cy="666.3" r="10.8" fill="#6a6a6a" stroke="#4a4a4a" stroke-width="1"/>
<circle cx="659" cy="666.3" r="10.8" fill="#6a6a6a" stroke="#4a4a4a" stroke-width="1"/>
<circle cx="617" cy="624.2" r="32" fill="#707070" stroke="#505050" stroke-width="2.4"/>
</svg>
<div class="a" style="left:910px;top:343px;width:27px;height:26px;background:#e1e1e1;border:1px solid #adadad"></div>
<div class="a" style="left:910px;top:376px;width:27px;height:26px;background:#e1e1e1;border:1px solid #adadad"></div>
<div class="a" style="left:910px;top:424px;width:27px;height:26px;background:#e1e1e1;border:1px solid #adadad"></div>
<div class="a" style="left:910px;top:457px;width:27px;height:26px;background:#e1e1e1;border:1px solid #adadad"></div>
<div class="a" style="left:910px;top:490px;width:27px;height:26px;background:#e1e1e1;border:1px solid #adadad"></div>
<div class="a" style="left:910px;top:523px;width:27px;height:26px;background:#e1e1e1;border:1px solid #adadad"></div>
<div class="a" style="left:910px;top:556px;width:27px;height:26px;background:#e1e1e1;border:1px solid #adadad"></div>
<div class="a" style="left:910px;top:589px;width:27px;height:26px;background:#e1e1e1;border:1px solid #adadad"></div>
<div class="a" style="left:910px;top:642px;width:27px;height:26px;background:#e1e1e1;border:1px solid #adadad"></div>
<div class="a" style="left:910px;top:675px;width:27px;height:26px;background:#e1e1e1;border:1px solid #adadad"></div>

<div class="a" style="left:76px;top:102px;width:15px;height:633px;background:linear-gradient(to right,rgba(0,0,0,0),rgba(0,0,0,0.13))"></div>
<div class="a" style="left:957px;top:102px;width:14px;height:633px;background:linear-gradient(to left,rgba(0,0,0,0),rgba(0,0,0,0.35))"></div>
<div class="a" style="left:91px;top:91px;width:866px;height:11px;background:linear-gradient(rgba(0,0,0,0),rgba(0,0,0,0.09))"></div>
<svg class="a" style="left:0;top:0" width="1381" height="735"><path d="M923.5 348.0 L930.4 352.0 L930.4 360.0 L923.5 364.0 L916.6 360.0 L916.6 352.0Z" fill="#a8a8a8"/><path d="M923.5 348.0 L930.4 352.0 L923.5 356.0 L916.6 352.0Z" fill="#d0d0d0"/><path d="M923.5 348 L930.4 352.0 L930.4 360.0 L923.5 364 L916.6 360.0 L916.6 352.0 Z M916.6 352.0 L923.5 356 L930.4 352.0 M923.5 356 V364" fill="none" stroke="#555" stroke-width="1"/><rect x="917" y="383" width="14" height="13" fill="#e8e8e8"/><path d="M916 382 H931 L916 397 Z" fill="#3a9a3a"/><rect x="919" y="385" width="10" height="10" fill="#b8b8b8"/><path d="M915 398 L932 381" stroke="#333" stroke-width="1"/><path d="M923.5 429.0 L930.4 433.0 L930.4 441.0 L923.5 445.0 L916.6 441.0 L916.6 433.0Z" fill="#f4f4f4"/><path d="M923.5 429.0 L923.5 437.0 L916.6 441.0 L916.6 433.0Z" fill="#2a9ee8"/><path d="M923.5 429 L930.4 433.0 L930.4 441.0 L923.5 445 L916.6 441.0 L916.6 433.0 Z M916.6 433.0 L923.5 437 L930.4 433.0 M923.5 437 V445" fill="none" stroke="#555" stroke-width="1"/><path d="M923.5 462.0 L930.4 466.0 L930.4 474.0 L923.5 478.0 L916.6 474.0 L916.6 466.0Z" fill="#f4f4f4"/><path d="M923.5 470.0 L930.4 466.0 L930.4 474.0 L923.5 478.0Z" fill="#2a9ee8"/><path d="M923.5 462 L930.4 466.0 L930.4 474.0 L923.5 478 L916.6 474.0 L916.6 466.0 Z M916.6 466.0 L923.5 470 L930.4 466.0 M923.5 470 V478" fill="none" stroke="#555" stroke-width="1"/><path d="M923.5 495.0 L930.4 499.0 L930.4 507.0 L923.5 511.0 L916.6 507.0 L916.6 499.0Z" fill="#f4f4f4"/><path d="M916.6 499.0 L923.5 503.0 L923.5 511.0 L916.6 507.0Z" fill="#2a9ee8"/><path d="M923.5 495 L930.4 499.0 L930.4 507.0 L923.5 511 L916.6 507.0 L916.6 499.0 Z M916.6 499.0 L923.5 503 L930.4 499.0 M923.5 503 V511" fill="none" stroke="#555" stroke-width="1"/><path d="M923.5 528.0 L930.4 532.0 L930.4 540.0 L923.5 544.0 L916.6 540.0 L916.6 532.0Z" fill="#f4f4f4"/><path d="M923.5 528.0 L930.4 532.0 L930.4 540.0 L923.5 540.0Z" fill="#2a9ee8"/><path d="M923.5 528 L930.4 532.0 L930.4 540.0 L923.5 544 L916.6 540.0 L916.6 532.0 Z M916.6 532.0 L923.5 536 L930.4 532.0 M923.5 536 V544" fill="none" stroke="#555" stroke-width="1"/><path d="M923.5 561.0 L930.4 565.0 L930.4 573.0 L923.5 577.0 L916.6 573.0 L916.6 565.0Z" fill="#f4f4f4"/><path d="M923.5 561.0 L930.4 565.0 L923.5 569.0 L916.6 565.0Z" fill="#2a9ee8"/><path d="M923.5 561 L930.4 565.0 L930.4 573.0 L923.5 577 L916.6 573.0 L916.6 565.0 Z M916.6 565.0 L923.5 569 L930.4 565.0 M923.5 569 V577" fill="none" stroke="#555" stroke-width="1"/><path d="M923.5 594.0 L930.4 598.0 L930.4 606.0 L923.5 610.0 L916.6 606.0 L916.6 598.0Z" fill="#f4f4f4"/><path d="M916.6 603.6 L930.4 603.6 L930.4 606.0 L923.5 610.0 L916.6 606.0Z" fill="#2a9ee8"/><path d="M923.5 594 L930.4 598.0 L930.4 606.0 L923.5 610 L916.6 606.0 L916.6 598.0 Z M916.6 598.0 L923.5 602 L930.4 598.0 M923.5 602 V610" fill="none" stroke="#555" stroke-width="1"/><g fill="none" stroke="#1e88d4" stroke-width="1.5" stroke-linecap="round"><path d="M916.8 653.5 A6.5 6.5 0 0 1 929 651.5"/><path d="M929.2 656.5 A6.5 6.5 0 0 1 917 658.5"/><path d="M926 651.8 L929.3 652 L929.8 648.5"/><path d="M920 658.2 L916.7 658 L916.2 661.5"/></g><g fill="none" stroke="#777" stroke-width="0.9"><circle cx="922" cy="684" r="3.5"/><circle cx="920" cy="688" r="3.5" stroke="#5aaae0"/><circle cx="924" cy="688" r="3.5"/></g><rect x="919" y="685" width="5" height="3" fill="#999"/><circle cx="926.5" cy="691.5" r="3.9000000000000004" fill="#c8203c"/><rect x="925.40" y="686.50" width="2.2" height="5.00" fill="#c8203c" transform="rotate(0 926.5 691.5)"/><rect x="925.40" y="686.50" width="2.2" height="5.00" fill="#c8203c" transform="rotate(45 926.5 691.5)"/><rect x="925.40" y="686.50" width="2.2" height="5.00" fill="#c8203c" transform="rotate(90 926.5 691.5)"/><rect x="925.40" y="686.50" width="2.2" height="5.00" fill="#c8203c" transform="rotate(135 926.5 691.5)"/><rect x="925.40" y="686.50" width="2.2" height="5.00" fill="#c8203c" transform="rotate(180 926.5 691.5)"/><rect x="925.40" y="686.50" width="2.2" height="5.00" fill="#c8203c" transform="rotate(225 926.5 691.5)"/><rect x="925.40" y="686.50" width="2.2" height="5.00" fill="#c8203c" transform="rotate(270 926.5 691.5)"/><rect x="925.40" y="686.50" width="2.2" height="5.00" fill="#c8203c" transform="rotate(315 926.5 691.5)"/><circle cx="926.5" cy="691.5" r="1.60" fill="#fff"/></svg>
</body></html>
